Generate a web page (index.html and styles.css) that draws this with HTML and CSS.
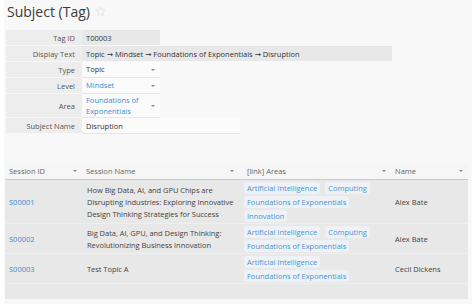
FILE: index.html
```html
<!DOCTYPE html>
<html lang="en">
<head>
    <meta charset="UTF-8">
    <meta name="viewport" content="width=device-width, initial-scale=1.0">
    <title>Subject (Tag)</title>
    <link rel="stylesheet" href="styles.css">
</head>
<body>
    <div class="page">
        <h1 class="title">
            Subject (Tag)
            <svg class="star" viewBox="0 0 24 24" width="11" height="11">
                <path d="M12 2.5l2.9 6.1 6.6.8-4.9 4.5 1.3 6.6L12 17.2l-5.9 3.3 1.3-6.6-4.9-4.5 6.6-.8z" fill="none" stroke="#dcdcdc" stroke-width="1.6" stroke-linejoin="round"/>
            </svg>
        </h1>

        <div class="form">
            <div class="form-row">
                <div class="label">Tag ID</div>
                <div class="value readonly w-short">T00003</div>
            </div>
            <div class="form-row">
                <div class="label">Display Text</div>
                <div class="value readonly w-wide">Topic &rarr; Mindset &rarr; Foundations of Exponentials &rarr; Disruption</div>
            </div>
            <div class="form-row">
                <div class="label">Type</div>
                <div class="value select w-short"><span>Topic</span><i class="caret"></i></div>
            </div>
            <div class="form-row">
                <div class="label">Level</div>
                <div class="value select w-short"><span class="link">Mindset</span><i class="caret"></i></div>
            </div>
            <div class="form-row tall">
                <div class="label">Area</div>
                <div class="value select w-short"><span class="link">Foundations of Exponentials</span><i class="caret"></i></div>
            </div>
            <div class="form-row">
                <div class="label">Subject Name</div>
                <div class="value w-mid">Disruption</div>
            </div>
        </div>

        <table class="grid">
            <colgroup>
                <col class="c-id">
                <col class="c-name">
                <col class="c-areas">
                <col class="c-person">
            </colgroup>
            <thead>
                <tr>
                    <th><div class="th">Session ID<i class="caret"></i></div></th>
                    <th><div class="th">Session Name<i class="caret"></i></div></th>
                    <th class="areas-head"><div class="th">[link] Areas<i class="caret"></i></div></th>
                    <th><div class="th">Name<i class="caret"></i></div></th>
                </tr>
            </thead>
            <tbody>
                <tr class="r3">
                    <td><a class="link">S00001</a></td>
                    <td class="session">How Big Data, AI, and GPU Chips are Disrupting Industries: Exploring Innovative Design Thinking Strategies for Success</td>
                    <td>
                        <div class="pills">
                            <span class="pill">Artificial Intelligence</span>
                            <span class="pill">Computing</span>
                            <span class="pill">Foundations of Exponentials</span>
                            <span class="pill">Innovation</span>
                        </div>
                    </td>
                    <td>Alex Bate</td>
                </tr>
                <tr class="r2">
                    <td><a class="link">S00002</a></td>
                    <td class="session">Big Data, AI, GPU, and Design Thinking: Revolutionizing Business Innovation</td>
                    <td>
                        <div class="pills">
                            <span class="pill">Artificial Intelligence</span>
                            <span class="pill">Computing</span>
                            <span class="pill">Foundations of Exponentials</span>
                        </div>
                    </td>
                    <td>Alex Bate</td>
                </tr>
                <tr class="r2">
                    <td><a class="link">S00003</a></td>
                    <td class="session">Test Topic A</td>
                    <td>
                        <div class="pills stack">
                            <span class="pill">Artificial Intelligence</span>
                            <span class="pill">Foundations of Exponentials</span>
                        </div>
                    </td>
                    <td>Cecil Dickens</td>
                </tr>
                <tr class="filler">
                    <td colspan="4"></td>
                </tr>
            </tbody>
        </table>
    </div>
</body>
</html>
```

FILE: styles.css
```css
body {
    margin: 0;
    background-color: #ffffff;
    font-family: "Open Sans", "DejaVu Sans", sans-serif;
    color: #444;
}

.page {
    margin-left: 4px;
    width: 468px;
    height: 304px;
    background-color: #f8f8f8;
    overflow: hidden;
}

.title {
    margin: 0;
    padding: 2px 0 0 3px;
    height: 20px;
    font-size: 14px;
    line-height: 20px;
    font-weight: normal;
    color: #3a3a3a;
    display: flex;
    align-items: center;
    gap: 5px;
}

.star {
    margin-top: -1px;
}

.link {
    color: #3f8dcc;
    text-decoration: none;
}

/* form */

.form {
    margin: 8px 0 0 2px;
    font-size: 7.5px;
}

.form-row {
    display: flex;
    height: 16px;
}

.form-row.tall {
    height: 24px;
}

.label {
    width: 69px;
    padding-right: 7px;
    text-align: right;
    background-color: #ededed;
    border-bottom: 1px solid #f8f8f8;
    color: #555;
    display: flex;
    align-items: center;
    justify-content: flex-end;
}

.value {
    padding-left: 4px;
    border-bottom: 1px solid #e6e6e6;
    display: flex;
    align-items: center;
    color: #333;
    background-color: #fbfbfb;
}

.value.readonly {
    background-color: #e8e8e8;
    border-bottom-color: #f8f8f8;
}

.w-short {
    width: 74px;
}

.w-wide {
    width: 306px;
}

.w-mid {
    width: 154px;
}

.select {
    justify-content: space-between;
    padding-right: 5px;
    width: 69px;
}

.select span {
    line-height: 11px;
    width: 58px;
}

.caret {
    width: 0;
    height: 0;
    border-left: 2px solid transparent;
    border-right: 2px solid transparent;
    border-top: 2px solid #888;
    flex: none;
}

/* related sessions grid */

.grid {
    margin: 29px 0 0 1px;
    width: 463px;
    border-collapse: collapse;
    table-layout: fixed;
    font-size: 7.5px;
}

.c-id { width: 77px; }
.c-name { width: 157px; }
.c-areas { width: 152px; }
.c-person { width: 77px; }

.grid th {
    height: 16px;
    padding: 0 5px 0 4px;
    font-weight: normal;
    text-align: left;
    color: #666;
    background-color: #f6f6f6;
    border-bottom: 1px solid #c9c9c9;
}

.grid th.areas-head {
    padding-left: 8px;
}

.th {
    display: flex;
    justify-content: space-between;
    align-items: center;
}

.grid td {
    padding: 0 4px;
    background-color: #e8e8e8;
    border-bottom: 1px solid #efefef;
    color: #444;
    vertical-align: middle;
}

.grid td.session {
    padding: 0 0 0 5px;
    line-height: 12px;
    letter-spacing: -0.04px;
}

.r3 td {
    height: 43px;
}

.r2 td {
    height: 29px;
}

.filler td {
    height: 15px;
    border-bottom: none;
}

.pills {
    display: flex;
    flex-wrap: wrap;
    gap: 2px 5px;
    padding-left: 1px;
}

.pills.stack {
    flex-direction: column;
    align-items: flex-start;
}

.pill {
    height: 12px;
    line-height: 12px;
    padding: 0 3px;
    border-radius: 3px;
    background-color: #eef2f6;
    color: #4a94cf;
}
```
